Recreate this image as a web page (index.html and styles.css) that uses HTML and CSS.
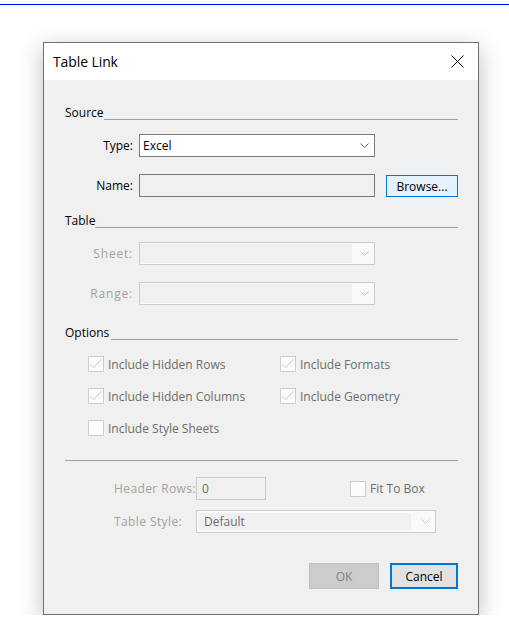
FILE: index.html
```html
<!DOCTYPE html>
<html lang="en">
<head>
<meta charset="utf-8">
<title>Table Link</title>
<link rel="stylesheet" href="styles.css">
</head>
<body>
<div class="guide"></div>

<div class="dialog">
  <div class="titlebar">
    <span class="title">Table Link</span>
    <button class="close" type="button" aria-label="Close">
      <svg width="13" height="13" viewBox="0 0 13 13"><path d="M0.5 0.5L12.5 12.5M12.5 0.5L0.5 12.5" stroke="#000" stroke-width="1" fill="none"/></svg>
    </button>
  </div>

  <div class="body">
    <div class="group-head head-source"><span>Source</span></div>
    <div class="form-grid grid-source">
      <span class="lbl">Type:</span>
      <div class="combo">
        <span class="combo-val">Excel</span>
        <svg class="chev" width="9" height="5" viewBox="0 0 9 5"><path d="M0.5 0.5L4.5 4.5L8.5 0.5" stroke="#606060" fill="none"/></svg>
      </div>
      <span></span>
      <span class="lbl">Name:</span>
      <div class="textbox"></div>
      <button class="btn browse" type="button">Browse...</button>
    </div>

    <div class="group-head head-table"><span>Table</span></div>
    <div class="form-grid grid-table">
      <span class="lbl dim">Sheet:</span>
      <div class="combo off">
        <span class="combo-field"></span>
        <svg class="chev" width="9" height="5" viewBox="0 0 9 5"><path d="M0.5 0.5L4.5 4.5L8.5 0.5" stroke="#c4c4c4" fill="none"/></svg>
      </div>
      <span class="lbl dim">Range:</span>
      <div class="combo off">
        <span class="combo-field"></span>
        <svg class="chev" width="9" height="5" viewBox="0 0 9 5"><path d="M0.5 0.5L4.5 4.5L8.5 0.5" stroke="#c4c4c4" fill="none"/></svg>
      </div>
    </div>

    <div class="group-head head-options"><span>Options</span></div>
    <div class="checks">
      <div class="check"><span class="box on"><svg width="14" height="14" viewBox="0 0 14 14"><path d="M1.5 7.5L4.5 10.5L12.5 2.5" stroke="#c6c6c6" fill="none"/></svg></span><span>Include Hidden Rows</span></div>
      <div class="check"><span class="box on"><svg width="14" height="14" viewBox="0 0 14 14"><path d="M1.5 7.5L4.5 10.5L12.5 2.5" stroke="#c6c6c6" fill="none"/></svg></span><span>Include Formats</span></div>
      <div class="check"><span class="box on"><svg width="14" height="14" viewBox="0 0 14 14"><path d="M1.5 7.5L4.5 10.5L12.5 2.5" stroke="#c6c6c6" fill="none"/></svg></span><span>Include Hidden Columns</span></div>
      <div class="check"><span class="box on"><svg width="14" height="14" viewBox="0 0 14 14"><path d="M1.5 7.5L4.5 10.5L12.5 2.5" stroke="#c6c6c6" fill="none"/></svg></span><span>Include Geometry</span></div>
      <div class="check"><span class="box"></span><span>Include Style Sheets</span></div>
    </div>

    <div class="rule"></div>

    <div class="tail">
      <div class="tail-row">
        <span class="lbl-left dim">Header Rows:</span>
        <div class="textbox small"><span>0</span></div>
        <div class="check fit"><span class="box"></span><span>Fit To Box</span></div>
      </div>
      <div class="tail-row">
        <span class="lbl-left dim">Table Style:</span>
        <div class="combo off wide">
          <span class="combo-field"><span class="combo-val grey">Default</span></span>
          <svg class="chev" width="9" height="5" viewBox="0 0 9 5"><path d="M0.5 0.5L4.5 4.5L8.5 0.5" stroke="#c4c4c4" fill="none"/></svg>
        </div>
      </div>
    </div>

    <div class="actions">
      <button class="btn ok" type="button" disabled>OK</button>
      <button class="btn cancel" type="button">Cancel</button>
    </div>
  </div>
</div>
</body>
</html>
```

FILE: styles.css
```css
* {
  box-sizing: border-box;
}

html,
body {
  margin: 0;
  padding: 0;
  background: #ffffff;
}

body {
  font-family: "Open Sans", "Noto Sans", sans-serif;
  font-size: 12px;
  color: #000000;
}

/* thin blue guide across the top of the canvas */
.guide {
  height: 1px;
  margin-top: 4px;
  background: #0000ff;
}

/* dialog window */
.dialog {
  width: 436px;
  height: 573px;
  margin: 37px 0 0 43px;
  border: 1px solid #707070;
  background: #f0f0f0;
  display: flex;
  flex-direction: column;
  box-shadow: 0 6px 22px rgba(0, 0, 0, 0.26);
}

.titlebar {
  flex: none;
  height: 37px;
  background: #ffffff;
  display: flex;
  align-items: center;
  justify-content: space-between;
  padding: 0 14px 0 9px;
}

.title {
  font-size: 14px;
  letter-spacing: -0.1px;
  line-height: 18px;
}

.close {
  width: 13px;
  height: 13px;
  padding: 0;
  border: 0;
  background: none;
  display: block;
}

.close svg {
  display: block;
}

.body {
  flex: 1;
  display: flex;
  flex-direction: column;
  padding: 0 20px 0 21px;
}

/* group headings with a rule running to the right edge */
.group-head {
  display: flex;
  align-items: flex-start;
  height: 16px;
}

.group-head span {
  line-height: 19px;
  height: 16px;
}

.group-head::after {
  content: "";
  flex: 1;
  height: 16px;
  border-bottom: 1px solid #a0a0a0;
}

.head-source {
  margin-top: 23px;
}

.head-table {
  margin-top: 14px;
}

.head-options {
  margin-top: 18px;
}

.head-options::after {
  margin-left: 2px;
}

/* label + control grids */
.form-grid {
  display: grid;
  grid-template-columns: 68px 236px 72px;
  grid-auto-rows: 23px;
  column-gap: 6px;
  row-gap: 17px;
  margin-top: 15px;
}

.grid-table {
  grid-template-columns: 68px 236px;
}

.lbl {
  display: flex;
  align-items: center;
  justify-content: flex-end;
}

.lbl.dim {
  letter-spacing: 0.8px;
}

.dim {
  color: #a2a2a2;
  letter-spacing: 0.4px;
}

.combo {
  display: flex;
  align-items: center;
  height: 23px;
  border: 1px solid #7a7a7a;
  background: #ffffff;
  padding: 0 4px 0 2px;
}

.combo-val {
  flex: 1;
  padding-left: 1px;
}

.combo .chev {
  flex: none;
  margin-right: 1px;
}

.combo.off {
  border-color: #cccccc;
  background: #f9f9f9;
  padding: 1px 4px 1px 0;
  align-items: stretch;
}

.combo.off .chev {
  align-self: center;
}

.combo-field {
  flex: 1;
  margin-right: 8px;
  background: #f0f0f0;
  display: flex;
  align-items: center;
}

.combo-val.grey {
  color: #6d6d6d;
  padding-left: 5px;
  letter-spacing: 0;
}

.textbox {
  height: 23px;
  border: 1px solid #7a7a7a;
  background: #f0f0f0;
}

.btn {
  font-family: inherit;
  font-size: 12px;
  padding: 0;
  margin: 0;
  display: flex;
  align-items: center;
  justify-content: center;
}

.browse {
  width: 72px;
  height: 22px;
  align-self: end;
  border: 1px solid #0078d7;
  background: #e5f1fb;
  color: #000000;
  margin-left: 5px;
}

/* option check boxes */
.checks {
  display: grid;
  grid-template-columns: 192px 1fr;
  grid-auto-rows: 16px;
  row-gap: 16px;
  margin-top: 17px;
  padding-left: 23px;
}

.check {
  display: flex;
  align-items: center;
  gap: 4px;
  color: #6d6d6d;
}

.box {
  flex: none;
  width: 16px;
  height: 16px;
  border: 1px solid #cccccc;
  background: #fcfcfc;
  display: block;
}

.box svg {
  display: block;
}

.rule {
  margin-top: 24px;
  height: 1px;
  background: #a0a0a0;
}

/* header rows / table style block */
.tail {
  margin-top: 16px;
  padding-left: 49px;
  display: flex;
  flex-direction: column;
  gap: 10px;
}

.tail-row {
  display: flex;
  align-items: center;
  height: 23px;
}

.lbl-left {
  width: 82px;
  flex: none;
}

.textbox.small {
  width: 70px;
  border-color: #cccccc;
  display: flex;
  align-items: center;
  padding-left: 5px;
  color: #6d6d6d;
}

.check.fit {
  margin-left: 84px;
}

.combo.wide {
  width: 240px;
  padding: 2px 4px 2px 2px;
}

.combo.wide .combo-field {
  margin-right: 10px;
}

/* dialog buttons */
.actions {
  margin-top: 30px;
  display: flex;
  justify-content: flex-end;
  gap: 11px;
}

.ok {
  width: 70px;
  height: 26px;
  border: 1px solid #bfbfbf;
  background: #cccccc;
  color: #838383;
}

.cancel {
  width: 68px;
  height: 26px;
  border: 2px solid #0078d7;
  background: #e1e1e1;
  color: #000000;
}
```
